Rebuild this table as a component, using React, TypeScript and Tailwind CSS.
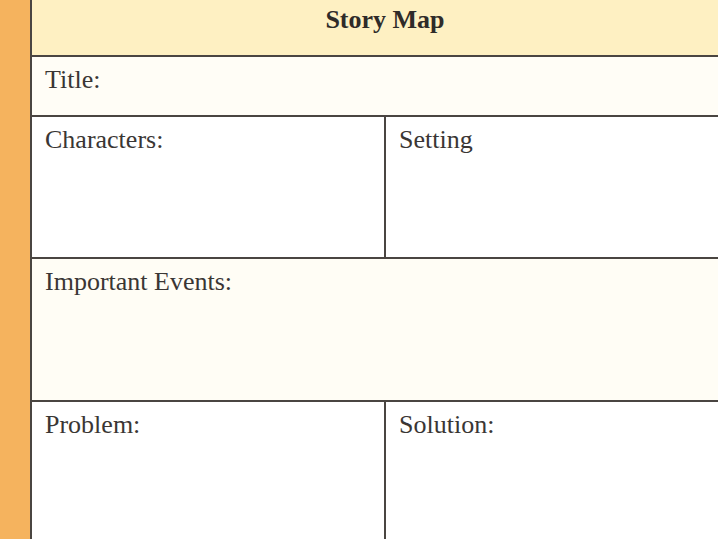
import React from "react";

const cell = "pl-[13px] pt-[10px] leading-none text-[26px] text-[#3a3634]";

const App: React.FC = () => {
  return (
    <div className="flex h-[539px] w-[718px] overflow-hidden bg-white font-['Liberation_Serif',serif]">
      {/* orange binding strip */}
      <div className="w-[30px] shrink-0 bg-[#f5b35e]" />

      <div className="flex w-[708px] shrink-0 flex-col border-l-2 border-[#4a4541]">
        <div className="h-[57px] shrink-0 border-b-2 border-[#4a4541] bg-[#fef0c2] pt-[7px] text-center text-[26px] font-bold leading-none text-[#2f2b29]">
          Story Map
        </div>

        <div className={`h-[60px] shrink-0 border-b-2 border-[#4a4541] bg-[#fffdf6] ${cell}`}>Title:</div>

        <div className="flex h-[142px] shrink-0 border-b-2 border-[#4a4541] bg-white">
          <div className={`w-[354px] border-r-2 border-[#4a4541] ${cell}`}>Characters:</div>
          <div className={`flex-1 ${cell}`}>Setting</div>
        </div>

        <div className={`h-[143px] shrink-0 border-b-2 border-[#4a4541] bg-[#fffdf5] ${cell}`}>
          Important Events:
        </div>

        <div className="flex flex-1 bg-white">
          <div className={`w-[354px] border-r-2 border-[#4a4541] ${cell}`}>Problem:</div>
          <div className={`flex-1 ${cell}`}>Solution:</div>
        </div>
      </div>
    </div>
  );
};

export default App;
